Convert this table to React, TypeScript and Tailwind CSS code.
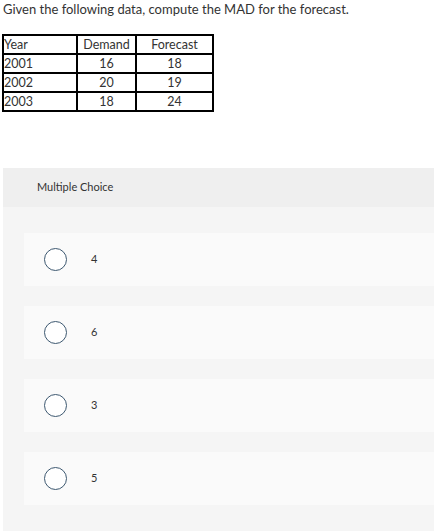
import React from "react";

const rows = [
  ["2001", "16", "18"],
  ["2002", "20", "19"],
  ["2003", "18", "24"],
];

const options = ["4", "6", "3", "5"];

export default function App() {
  return (
    <div className="min-h-[531px] bg-white text-[#333] overflow-hidden" style={{ fontFamily: "Lato, 'Open Sans', Arial, sans-serif" }}>
      <p className="pl-[3px] pt-[1px] text-[13px] leading-[16px]">
        Given the following data, compute the MAD for the forecast.
      </p>
      <table className="ml-[2px] mt-[17px] border-collapse border-2 border-black text-[12.5px] leading-[17px] text-[#333]">
        <tbody>
          <tr>
            <td className="w-[74px] border-2 border-black px-0 text-left">Year</td>
            <td className="w-[59px] border-2 border-black text-center">Demand</td>
            <td className="w-[77px] border-2 border-black text-center">Forecast</td>
          </tr>
          {rows.map((r) => (
            <tr key={r[0]}>
              <td className="border-2 border-black text-left">{r[0]}</td>
              <td className="border-2 border-black text-center">{r[1]}</td>
              <td className="border-2 border-black text-center">{r[2]}</td>
            </tr>
          ))}
        </tbody>
      </table>
      <div className="ml-[3px] mt-[56px] bg-[#f5f5f5] pb-[30px]">
        <div className="h-[39px] bg-[#efefef] pl-[34px] flex items-center text-[11px] text-[#333]">
          Multiple Choice
        </div>
        <div className="pt-[26px] pl-[21px] flex flex-col gap-[20px]">
          {options.map((o) => (
            <div key={o} className="h-[53px] bg-[#fafafa] flex items-center pl-[20px]">
              <div className="w-[23px] h-[23px] rounded-full border-[1.5px] border-[#3d5870] bg-white" />
              <span className="ml-[24px] text-[11px] text-[#333]">{o}</span>
            </div>
          ))}
        </div>
      </div>
    </div>
  );
}
